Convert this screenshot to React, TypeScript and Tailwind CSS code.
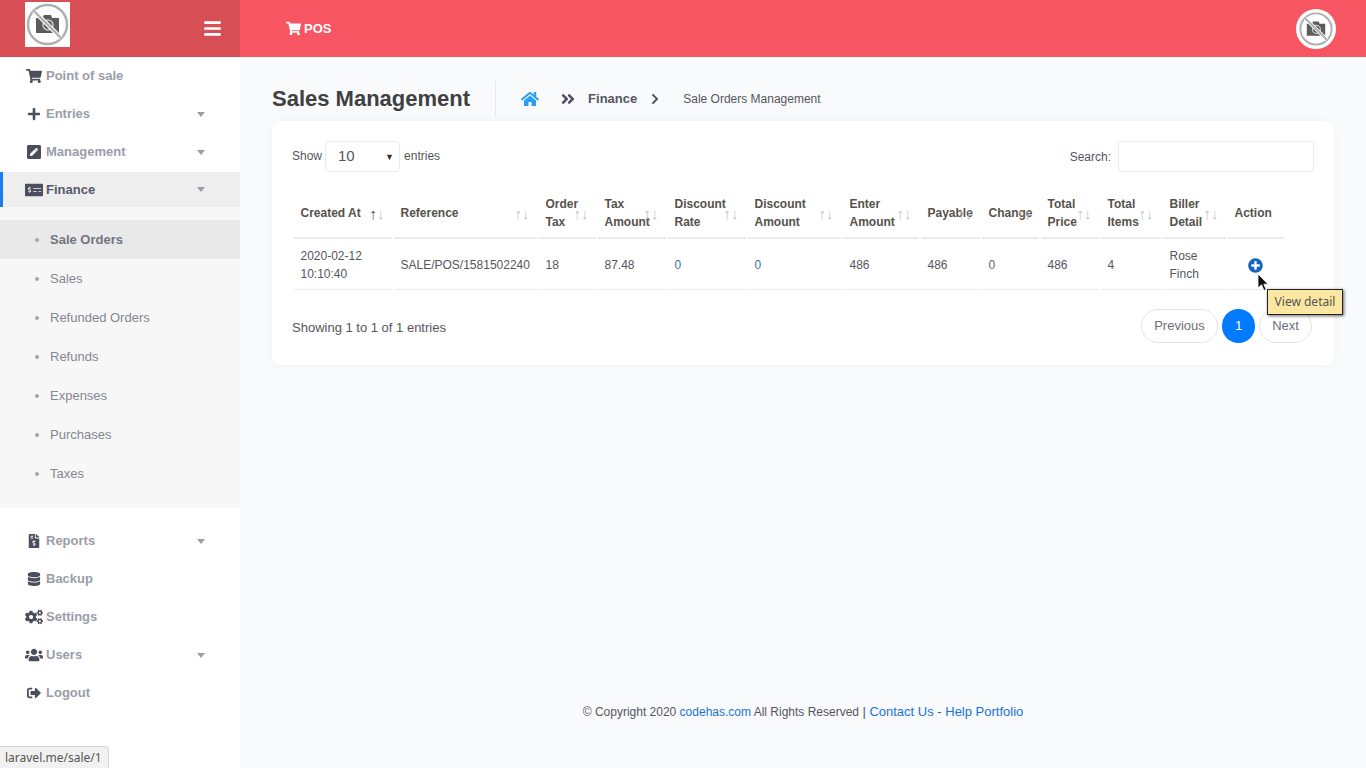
import { FaAngleDoubleRight, FaBars, FaChevronRight, FaCogs, FaDatabase, FaFileInvoiceDollar, FaHome, FaMoneyCheckAlt, FaPenSquare, FaPlus, FaPlusCircle, FaShoppingCart, FaSignOutAlt, FaUsers } from 'react-icons/fa';
import type { ReactNode } from 'react';

function NoPhoto({ className }: { className: string }) {
  return (
    <svg viewBox="0 0 45 45" className={className}>
      <circle cx="22.5" cy="22.5" r="19.5" fill="none" stroke="#aeaeae" strokeWidth="2.4" />
      <path d="M11 16h6l2-3h7l1 3h7v15H11z" fill="#5c5c5c" />
      <circle cx="23" cy="23" r="5" fill="none" stroke="#ccc" strokeWidth="1.5" />
      <path d="M9 9l27 27" stroke="#fff" strokeWidth="4.5" />
      <path d="M9 9l27 27" stroke="#aeaeae" strokeWidth="2.4" />
    </svg>
  );
}

function NavItem({ icon, label, caret, active }: { icon: ReactNode; label: string; caret?: boolean; active?: boolean }) {
  return (
    <div className={`flex items-center pr-[35px] text-[13px] font-bold ${active ? 'mt-[1px] h-[35px] border-l-[3px] border-[#1a7cf0] bg-[#eeeeee] pl-[22px] text-[#55596a]' : 'h-[38px] pl-[25px] text-[#9a9da8]'}`}>
      <span className="flex w-[21px] shrink-0 justify-center pr-[3px] text-[#4b4f5c]">{icon}</span>
      <span className="flex-1">{label}</span>
      {caret && <span className="h-0 w-0 border-x-[4.5px] border-t-[5px] border-x-transparent border-t-[#9a9da8]" />}
    </div>
  );
}

const subItems = ['Sale Orders', 'Sales', 'Refunded Orders', 'Refunds', 'Expenses', 'Purchases', 'Taxes'];

function Sidebar() {
  return (
    <aside className="flex w-[240px] shrink-0 flex-col bg-white">
      <NavItem icon={<FaShoppingCart className="text-[16px]" />} label="Point of sale" />
      <NavItem icon={<FaPlus className="text-[14px]" />} label="Entries" caret />
      <NavItem icon={<FaPenSquare className="text-[16px]" />} label="Management" caret />
      <NavItem icon={<FaMoneyCheckAlt className="text-[18px]" />} label="Finance" caret active />
      <div className="mb-[14px] bg-[#f7f7f7] pt-[13px] pb-[15px]">
        {subItems.map((item, i) => (
          <div key={item} className={`flex h-[39px] items-center pl-[35px] text-[13px] ${i === 0 ? 'bg-[#e9e9e9] font-bold text-[#73757f]' : 'text-[#84878f]'}`}>
            <span className="mr-[11px] h-[4px] w-[4px] rounded-full bg-[#a3a6ad]" />
            {item}
          </div>
        ))}
      </div>
      <NavItem icon={<FaFileInvoiceDollar className="text-[14px]" />} label="Reports" caret />
      <NavItem icon={<FaDatabase className="text-[14px]" />} label="Backup" />
      <NavItem icon={<FaCogs className="text-[18px]" />} label="Settings" />
      <NavItem icon={<FaUsers className="text-[18px]" />} label="Users" caret />
      <NavItem icon={<FaSignOutAlt className="text-[14px]" />} label="Logout" />
    </aside>
  );
}

const headers: { lines: string[]; width: string; noArrows?: boolean }[] = [
  { lines: ['Created At'], width: 'w-[98px]' },
  { lines: ['Reference'], width: 'w-[143px]' },
  { lines: ['Order', 'Tax'], width: 'w-[57px]' },
  { lines: ['Tax', 'Amount'], width: 'w-[68px]' },
  { lines: ['Discount', 'Rate'], width: 'w-[78px]' },
  { lines: ['Discount', 'Amount'], width: 'w-[93px]' },
  { lines: ['Enter', 'Amount'], width: 'w-[76px]' },
  { lines: ['Payable'], width: 'w-[59px]' },
  { lines: ['Change'], width: 'w-[57px]' },
  { lines: ['Total', 'Price'], width: 'w-[58px]' },
  { lines: ['Total', 'Items'], width: 'w-[60px]' },
  { lines: ['Biller', 'Detail'], width: 'w-[63px]' },
  { lines: ['Action'], width: 'w-[56px]', noArrows: true },
];

const rowCells: ReactNode[] = [
  <>2020-02-12<br />10:10:40</>,
  'SALE/POS/1581502240',
  '18',
  '87.48',
  <span className="text-[#4f6b85]">0</span>,
  <span className="text-[#4f6b85]">0</span>,
  '486',
  '486',
  <span className="text-[#4f6b85]">0</span>,
  '486',
  '4',
  <>Rose<br />Finch</>,
];

function SalesTable() {
  return (
    <table className="mt-[16px] ml-[-0.5px] w-[994px] table-fixed border-separate border-spacing-x-[2px] border-spacing-y-0 text-[12px] leading-[18px] text-[#55565c]">
      <thead>
        <tr>
          {headers.map((h, i) => (
            <th key={i} className={`relative border-b-2 border-[#e9ebef] px-[7px] pt-[7px] pb-[6px] text-left font-bold ${h.width} text-[#55524c]`}>
              {h.lines.map(l => <div key={l}>{l}</div>)}
              {!h.noArrows && (
                <span className="absolute right-[7px] top-[18px] text-[15px] leading-none text-[#c2c4c8]">
                  <span className={i === 0 ? 'text-[#444]' : ''}>↑</span>↓
                </span>
              )}
            </th>
          ))}
        </tr>
      </thead>
      <tbody>
        <tr>
          {rowCells.map((c, i) => (
            <td key={i} className="border-b border-[#e9ebef] px-[7px] pt-[8px] pb-[6px]">{c}</td>
          ))}
          <td className="border-b border-[#e9ebef] px-[7px] pt-[8px] pb-[6px]">
            <FaPlusCircle className="ml-[13px] text-[15px] text-[#1565c0]" />
          </td>
        </tr>
      </tbody>
    </table>
  );
}

export default function App() {
  return (
    <div className="relative flex h-screen w-full flex-col overflow-hidden bg-[#f9fafc] font-['Liberation_Sans',Arial,sans-serif]">
      <header className="flex h-[57px] shrink-0 items-center bg-[#f75561] text-white">
        <div className="flex h-full w-[240px] items-center justify-between bg-[#d84e55] pl-[25px] pr-[18px]">
          <div className="mt-[-8px] bg-white">
            <NoPhoto className="h-[45px] w-[45px]" />
          </div>
          <FaBars className="text-[19px]" />
        </div>
        <div className="ml-[46px] flex items-center gap-[3px] text-[13px] font-bold">
          <FaShoppingCart className="text-[15px]" />
          POS
        </div>
        <div className="mr-[30px] ml-auto flex h-[40px] w-[40px] items-center justify-center overflow-hidden rounded-full bg-white">
          <NoPhoto className="h-[36px] w-[36px]" />
        </div>
      </header>

      <div className="flex min-h-0 flex-1">
        <Sidebar />
        <main className="flex min-w-0 flex-1 flex-col px-[32px]">
          <div className="mt-[24px] flex h-[36px] shrink-0 items-center">
            <h1 className="mt-[-2px] text-[22px] font-bold text-[#404040]">Sales Management</h1>
            <div className="mx-[25px] h-full w-px bg-[#e6e7ea]" />
            <FaHome className="text-[18px] text-[#2a9df4]" />
            <FaAngleDoubleRight className="ml-[21px] text-[16px] text-[#4f5260]" />
            <span className="ml-[12px] text-[13px] font-bold text-[#55565c]">Finance</span>
            <FaChevronRight className="ml-[12px] text-[12px] text-[#4f5260]" />
            <span className="ml-[22px] text-[12px] text-[#55565c]">Sale Orders Management</span>
          </div>

          <section className="mt-[4px] h-[244px] shrink-0 rounded-lg bg-white px-[20px] pt-[20px] shadow-[0_0_8px_rgba(0,0,0,0.04)]">
            <div className="flex items-center justify-between text-[12px] text-[#55565c]">
              <div className="flex items-center">
                <span className="mb-[2px]">Show</span>
                <div className="relative mx-[3px] mr-[4px] flex h-[31px] w-[75px] items-center rounded border border-[#e9ebef] pl-[12px] text-[15px]">
                  10
                  <span className="absolute right-[5px] top-[9px] text-[9px] text-[#333]">▼</span>
                </div>
                <span className="mb-[2px]">entries</span>
              </div>
              <div className="flex items-center">
                Search:
                <div className="ml-[7px] h-[31px] w-[196px] rounded border border-[#e9ebef]" />
              </div>
            </div>

            <SalesTable />

            <div className="flex items-start justify-between pt-[19px] text-[13px] text-[#6b6f78]">
              <span className="mt-[9px] text-[#55565c]">Showing 1 to 1 of 1 entries</span>
              <div className="mr-[2px] flex gap-[4px]">
                <span className="flex h-[34px] w-[77px] items-center justify-center rounded-full border border-[#e2e4e8]">Previous</span>
                <span className="flex h-[34px] w-[33px] items-center justify-center rounded-full bg-[#007bff] text-white">1</span>
                <span className="flex h-[34px] w-[53px] items-center justify-center rounded-full border border-[#e2e4e8]">Next</span>
              </div>
            </div>
          </section>

          <footer className="mt-auto mb-[47px] text-center text-[12px] text-[#55565c]">
            © Copyright 2020 <span className="text-[#1a73d8]">codehas.com</span> All Rights Reserved{' '}
            <span className="text-[13px] text-[#1a73d8]"><span className="text-[#55565c]">|</span> Contact Us <span className="text-[#55565c]">-</span> Help Portfolio</span>
          </footer>
        </main>
      </div>

      {/* tooltip, mouse pointer and browser status bubble sit over the page */}
      <div className="absolute left-[1267px] top-[289px] flex h-[26px] w-[76px] items-center justify-center border border-[#222] bg-[#fbe7a1] font-['Noto_Sans',sans-serif] text-[12px] text-[#555] shadow-[1px_1px_3px_rgba(0,0,0,0.6)]">
        View detail
      </div>
      <svg viewBox="0 0 12 19" className="absolute left-[1257px] top-[273px] h-[19px] w-[12px]">
        <path d="M1 1v14l3.5-3.2L7 17.5l2.2-1-2.4-5.3H11z" fill="#111" stroke="#fff" strokeWidth="0.8" />
      </svg>
      <div className="absolute bottom-0 left-0 flex h-[22px] w-[109px] items-center rounded-tr border-t border-r border-[#d5d5d5] bg-[#f1f1f1] pl-[5px] font-['Noto_Sans',sans-serif] text-[12px] text-[#555]">
        laravel.me/sale/1
      </div>
    </div>
  );
}
